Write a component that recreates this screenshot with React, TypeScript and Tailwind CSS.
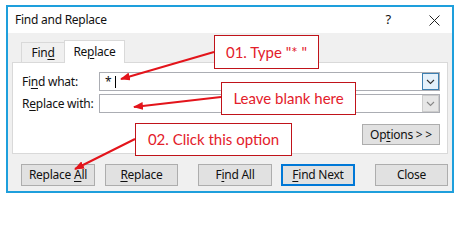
import React from "react";

const ui = { fontFamily: '"Noto Sans", "Open Sans", sans-serif' };
const callFont = { fontFamily: 'Lato, "Liberation Sans", sans-serif' };

function U({ children }: { children: React.ReactNode }) {
  return <span className="underline underline-offset-2 decoration-1">{children}</span>;
}

function Chevron({ color }: { color: string }) {
  return (
    <svg width="9" height="6" viewBox="0 0 9 6">
      <path d="M1 1 L4.5 4.5 L8 1" fill="none" stroke={color} strokeWidth="1.1" />
    </svg>
  );
}

function Combo({ active, children }: { active?: boolean; children?: React.ReactNode }) {
  return (
    <div className="flex h-[19px] w-[341px] items-stretch border border-[#abadb3] bg-white">
      <div className="flex flex-1 items-center pl-[5px] text-[12px] text-[#111]">{children}</div>
      <div
        className={
          active
            ? "flex w-[17px] items-center justify-center border border-[#3c7fb1] bg-[#e5f1fb]"
            : "flex w-[17px] items-center justify-center border border-[#cccccc] bg-[#e6e6e6]"
        }
      >
        <Chevron color={active ? "#333" : "#888"} />
      </div>
    </div>
  );
}

function Btn({ w, ml, focus, children }: { w: string; ml: string; focus?: boolean; children: React.ReactNode }) {
  return (
    <div
      className={[
        "flex h-[22px] items-center justify-center bg-[#e1e1e1] text-[12px] text-[#111]",
        w,
        ml,
        focus ? "border-2 border-[#0078d7]" : "border border-[#adadad]",
      ].join(" ")}
    >
      <span>{children}</span>
    </div>
  );
}

function Callout({ cls, children }: { cls: string; children: React.ReactNode }) {
  return (
    <div
      className={`absolute flex items-center justify-center border border-[#c0131a] bg-white text-[15px] text-[#e3202a] ${cls}`}
      style={callFont}
    >
      {children}
    </div>
  );
}

export default function App() {
  return (
    <div
      className="relative h-[200px] w-[463px] overflow-hidden bg-white pl-[6px] pt-[5px] tracking-[-0.25px]"
      style={ui}
    >
      <div className="flex h-[188px] w-[448px] flex-col border-2 border-[#1e9fdc] bg-[#f0f0f0]">
        <div className="flex h-[26px] items-center bg-white pl-[7px] text-[12px] text-[#111]">
          <span className="flex-1">Find and Replace</span>
          <span className="mr-[38px] text-[13px]">?</span>
          <svg width="11" height="11" viewBox="0 0 11 11" className="mr-[12px]">
            <path d="M0.5 0.5 L10.5 10.5 M10.5 0.5 L0.5 10.5" stroke="#222" strokeWidth="1" />
          </svg>
        </div>

        <div className="mt-[7px] flex h-[22px] items-end pl-[13px]">
          <div className="flex h-[20px] w-[43px] items-center justify-center border-l border-t border-[#d9d9d9] text-[12px] text-[#111]">
            <span>
              Fin<U>d</U>
            </span>
          </div>
          <div className="relative top-[1px] flex h-[23px] w-[61px] items-center justify-center border border-b-0 border-[#d9d9d9] bg-white text-[12px] text-[#111]">
            <span>
              Re<U>p</U>lace
            </span>
          </div>
        </div>

        <div className="ml-[4px] flex h-[92px] w-[436px] flex-col border border-[#d9d9d9] bg-white pl-[9px] pt-[9px]">
          <div className="flex items-center">
            <span className="w-[77px] text-[12px] text-[#111]">
              Fi<U>n</U>d what:
            </span>
            <Combo active>
              <span>*</span>
              <span className="ml-[4px] inline-block h-[12px] w-[1px] bg-black" />
            </Combo>
          </div>
          <div className="mt-[3px] flex items-center">
            <span className="w-[77px] text-[12px] text-[#111]">
              R<U>e</U>place with:
            </span>
            <Combo />
          </div>
          <div className="mt-[11px] flex justify-end pr-[7px]">
            <div className="flex h-[21px] w-[78px] items-center justify-center border border-[#adadad] bg-[#e1e1e1] text-[12px] text-[#111]">
              <span>
                Op<U>t</U>ions &gt; &gt;
              </span>
            </div>
          </div>
        </div>

        <div className="mt-[10px] flex">
          <Btn w="w-[74px]" ml="ml-[13px]">
            Replace <U>A</U>ll
          </Btn>
          <Btn w="w-[73px]" ml="ml-[10px]">
            <U>R</U>eplace
          </Btn>
          <Btn w="w-[74px]" ml="ml-[20px]">
            F<U>i</U>nd All
          </Btn>
          <Btn w="w-[74px]" ml="ml-[9px]" focus>
            <U>F</U>ind Next
          </Btn>
          <Btn w="w-[73px]" ml="ml-[20px]">
            Close
          </Btn>
        </div>
      </div>

      <svg className="pointer-events-none absolute left-0 top-0" width="463" height="200" viewBox="0 0 463 200">
        <defs>
          <marker id="ah" markerWidth="10" markerHeight="8" refX="9" refY="4" orient="auto" markerUnits="userSpaceOnUse">
            <path d="M0 0 L10 4 L0 8 z" fill="#e3141b" />
          </marker>
        </defs>
        <g stroke="#e3141b" strokeWidth="2" fill="none">
          <line x1="214" y1="52" x2="121" y2="79" markerEnd="url(#ah)" />
          <line x1="221" y1="97" x2="134" y2="107" markerEnd="url(#ah)" />
          <line x1="135" y1="139" x2="75" y2="169" markerEnd="url(#ah)" />
        </g>
      </svg>

      <Callout cls="left-[214px] top-[35px] h-[34px] w-[105px] tracking-normal">01. Type "* "</Callout>
      <Callout cls="left-[221px] top-[82px] h-[33px] w-[135px] tracking-normal">Leave blank here</Callout>
      <Callout cls="left-[135px] top-[123px] h-[33px] w-[157px] tracking-normal">02. Click this option</Callout>
    </div>
  );
}
